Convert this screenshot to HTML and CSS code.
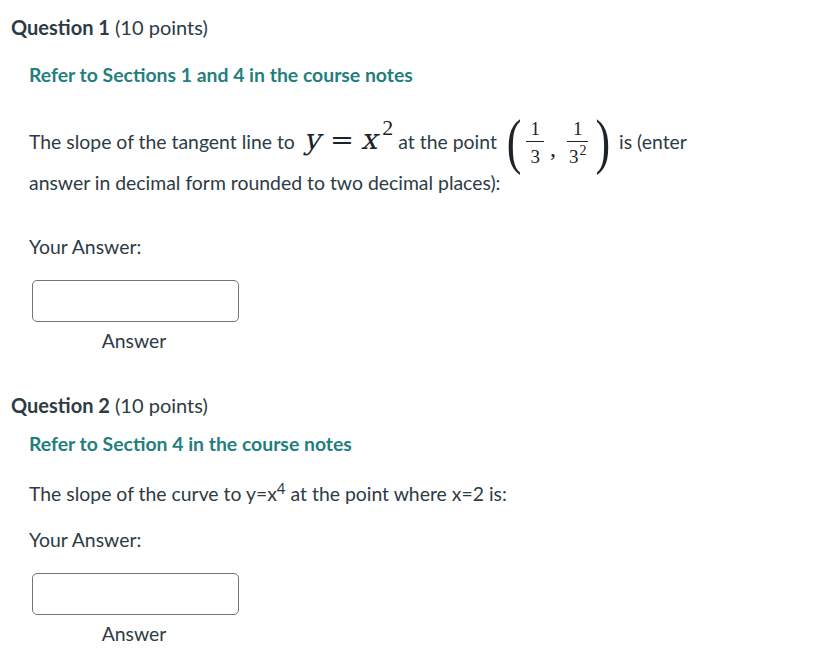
FILE: index.html
```html
<!DOCTYPE html>
<html>
<head>
<meta charset="utf-8">
<link rel="stylesheet" href="styles.css">
</head>
<body>
<div class="page">
  <section class="question q1">
    <h2 class="q-title"><strong>Question 1</strong> (10 points)</h2>
    <div class="q-body">
      <p class="ref">Refer to Sections 1 and 4 in the course notes</p>
      <p class="stem">The slope of the tangent line to <span class="math eqn"><span class="mv">y</span><span class="eq">=</span><span class="mv">x</span><sup class="msup">2</sup></span> at the point <span class="math point"><span class="paren">(</span><span class="frac f1"><span class="num">1</span><span class="den">3</span></span><span class="comma">,</span><span class="frac f2"><span class="num">1</span><span class="den">3<sup>2</sup></span></span><span class="paren">)</span></span> is (enter answer in decimal form rounded to two decimal places):</p>
      <p class="your">Your Answer:</p>
      <div class="answer-block">
        <input class="answer-input" type="text" aria-label="Answer">
        <div class="answer-label">Answer</div>
      </div>
    </div>
  </section>
  <section class="question q2">
    <h2 class="q-title"><strong>Question 2</strong> (10 points)</h2>
    <div class="q-body">
      <p class="ref">Refer to Section 4 in the course notes</p>
      <p class="stem2">The slope of the curve to y=x<sup class="sup4">4</sup> at the point where x=2 is:</p>
      <p class="your">Your Answer:</p>
      <div class="answer-block">
        <input class="answer-input" type="text" aria-label="Answer">
        <div class="answer-label">Answer</div>
      </div>
    </div>
  </section>
</div>
</body>
</html>
```
FILE: styles.css
```css
html, body {
  margin: 0;
  padding: 0;
  background: #ffffff;
}
body {
  font-family: Lato, "Noto Sans", sans-serif;
  color: #2d3b45;
  font-size: 19.4px;
}
.page {
  padding: 13px 0 0 11px;
}
.q-title {
  margin: 0;
  font-size: 20px;
  font-weight: 400;
  line-height: 28px;
  color: #2d3b45;
}
.q-title strong {
  font-weight: 700;
}
.q-body {
  padding-left: 18px;
}
.ref {
  margin: 0;
  color: #1f7f7e;
  font-weight: 700;
}
.q1 .ref {
  margin-top: 20px;
  line-height: 28px;
}
.stem {
  margin: 30px 0 0;
  width: 680px;
  line-height: 41px;
}
.math {
  font-family: "Liberation Serif", "DejaVu Serif", serif;
  color: #1d2328;
}
.eqn {
  font-family: "DejaVu Serif", "Liberation Serif", serif;
  font-size: 29px;
  margin-left: 6px;
}
.mv {
  display: inline-block;
  font-style: normal;
  transform: skewX(-14deg);
}
.eq {
  margin: 0 10px 0 9px;
  display: inline-block;
  transform: scaleX(1.1);
  font-size: 26px;
}
.msup {
  font-family: "Liberation Serif", serif;
  font-size: 22px;
  vertical-align: 14px;
  line-height: 0;
  margin-left: 3px;
}
.point {
  display: inline-flex;
  align-items: center;
  vertical-align: middle;
  margin: -24px 4px -24px 5px;
  position: relative;
  top: -2px;
}
.paren {
  font-size: 44px;
  line-height: 1;
  transform: scaleY(1.4);
  font-weight: 300;
}
.frac {
  display: inline-flex;
  flex-direction: column;
  align-items: center;
  font-size: 19px;
  line-height: 19px;
}
.f1 {
  margin: 0 0 0 5px;
}
.f2 {
  margin: 0 7px 0 11px;
}
.frac .num {
  border-bottom: 1.5px solid #1d2328;
  padding: 0 4px 3px;
  align-self: stretch;
  text-align: center;
}
.frac .den {
  padding-top: 5px;
  padding-left: 2px;
  padding-right: 2px;
}
.frac .den sup {
  font-size: 14px;
  vertical-align: 8px;
  line-height: 0;
  margin-left: 1px;
}
.comma {
  font-size: 24px;
  margin: 12px 0 0 6px;
}
.your {
  margin: 0;
}
.q1 .your {
  margin-top: 32px;
}
.answer-block {
  width: 210px;
  display: flex;
  flex-direction: column;
  align-items: center;
}
.q1 .answer-block {
  margin-top: 22px;
}
.answer-input {
  box-sizing: border-box;
  width: 207px;
  height: 42px;
  margin: 0 0 0 2px;
  border: 1px solid #6b7780;
  border-radius: 5px;
  background: #fff;
}
.answer-label {
  margin-top: 7px;
  line-height: 24px;
}
.q2 {
  margin-top: 38px;
}
.q2 .ref {
  margin-top: 13px;
  line-height: 24px;
}
.stem2 {
  margin: 25px 0 0;
  line-height: 26px;
}
.sup4 {
  font-size: 15px;
  vertical-align: 7px;
  line-height: 0;
}
.q2 .your {
  margin-top: 21px;
}
.q2 .answer-block {
  margin-top: 22px;
}
```
